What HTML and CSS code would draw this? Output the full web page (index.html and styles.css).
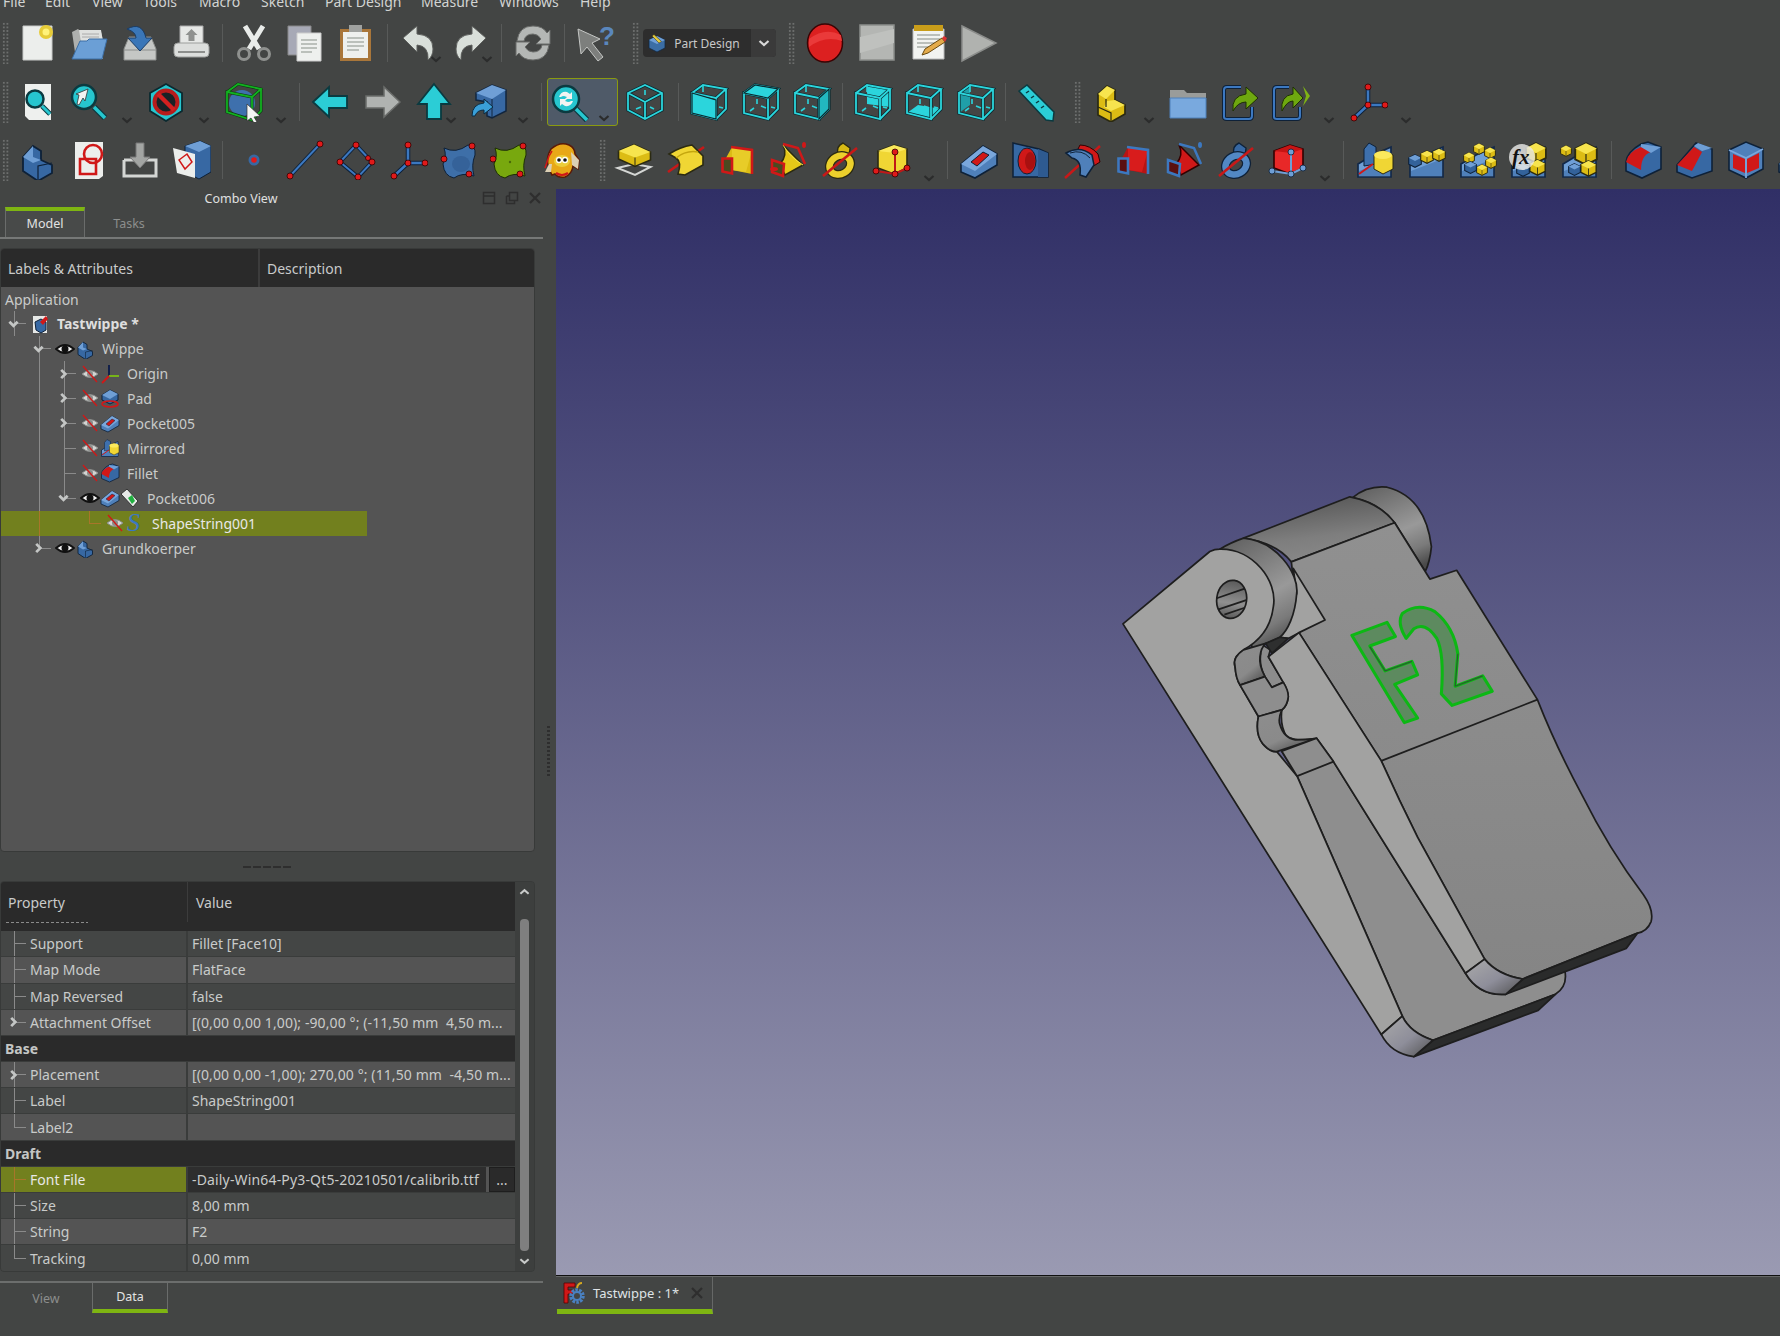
FILE: index.html
```html
<!DOCTYPE html>
<html lang="en">
<head>
<meta charset="utf-8">
<title>FreeCAD</title>
<link rel="stylesheet" href="styles.css">
</head>
<body>
<svg class="sprite" aria-hidden="true">
<defs>
<symbol id="ycube" viewBox="0 0 20 20"><path d="M10 1l9 4.500v9L10 19l-9-4.500v-9z" fill="#dcbc14" stroke="#2b2a12" stroke-width="1.600"/><path d="M1 5.500L10 10l9-4.500L10 1z" fill="#f7e44e"/><path d="M10 10v9" stroke="#2b2a12"/></symbol>
<symbol id="bcube" viewBox="0 0 20 20"><path d="M10 1l9 4.500v9L10 19l-9-4.500v-9z" fill="#33629a" stroke="#0e2138" stroke-width="1.600"/><path d="M1 5.500L10 10l9-4.500L10 1z" fill="#6f9fd6"/></symbol>
<symbol id="slab" viewBox="0 0 40 40"><path d="M3 37V24l15-9 18-8v30z" fill="#6f9fd6" stroke="#122848" stroke-width="1.700"/><path d="M4 31l31-12v17H4z" fill="#4f80ba"/></symbol>
<symbol id="chev" viewBox="0 0 12 7"><path d="M1.500 1l4.500 4 4.500-4" fill="none" stroke="currentColor" stroke-width="2.200"/></symbol>
<symbol id="chev2" viewBox="0 0 12 8"><path d="M1.500 1.500L6 6l4.500-4.500" fill="none" stroke="currentColor" stroke-width="3"/></symbol>
<symbol id="new" viewBox="0 0 40 40"><path d="M6 3h29v34H6z" fill="#eceeec" stroke="#c9cbc9"/><circle cx="29" cy="9" r="7" fill="#e6cb38"/><circle cx="29" cy="9" r="3.500" fill="#fff27a"/></symbol>
<symbol id="open" viewBox="0 0 40 40"><path d="M7 36L3 9l6-3 3 3h20l2 8v19z" fill="#aeb0ae"/><path d="M10 7h22l2 12H12z" fill="#dfe1df"/><path d="M13 11h17M13 14h17" stroke="#aaa"/><path d="M3 36l8-18 7 0 2-2h18l-5 20z" fill="#6b9fd6" stroke="#3c6ea5"/></symbol>
<symbol id="save" viewBox="0 0 40 40"><path d="M4 26l5-12h22l5 12v11H4z" fill="#c5c7c5" stroke="#8c8e8c"/><path d="M4 27h32" stroke="#8c8e8c"/><path d="M7 6q15-8 19 9h6L20 28 8 15h8q0-6-9-9z" fill="#3a76b8" stroke="#1b3d66"/></symbol>
<symbol id="print" viewBox="0 0 40 40"><path d="M9 3h23v20H9z" fill="#e6e8e6" stroke="#aaa"/><path d="M20.500 6l6 6h-3v6h-6v-6h-3z" fill="#8f918f"/><rect x="3" y="20" width="35" height="14" rx="4" fill="#dcdedc" stroke="#9c9e9c"/><path d="M7 29h27" stroke="#8c8e8c" stroke-width="2"/></symbol>
<symbol id="cut" viewBox="0 0 40 40"><path d="M11 3l14 23M29 3L15 26" stroke="#e9ecea" stroke-width="5" fill="none"/><circle cx="10" cy="31" r="5.500" fill="none" stroke="#8f918f" stroke-width="3"/><circle cx="30" cy="31" r="5.500" fill="none" stroke="#8f918f" stroke-width="3"/></symbol>
<symbol id="copy" viewBox="0 0 40 40"><path d="M3 3h23v29H3z" fill="#a7a9b6" stroke="#888"/><path d="M12 10h24v28H12z" fill="#eef0ee" stroke="#ccc"/><path d="M16 17h16M16 21h16M16 25h16M16 29h11" stroke="#aab0aa" stroke-width="1.500"/></symbol>
<symbol id="paste" viewBox="0 0 40 40"><path d="M4 6h31v32H4z" fill="#a9763a"/><path d="M7 9h25v26H7z" fill="#eef0ee"/><path d="M13 2h13v7H13z" fill="#9fa19f"/><path d="M11 15h17M11 19h17M11 23h17M11 27h12" stroke="#aab0aa" stroke-width="1.500"/></symbol>
<symbol id="undo" viewBox="0 0 40 40"><path d="M4 15L18 3v8q16 1 16 15 0 7-5 11 1-14-11-15v7z" fill="#d9dfda" stroke="#5d5f5d"/></symbol>
<symbol id="redo" viewBox="0 0 40 40"><path d="M36 15L22 3v8Q6 12 6 26q0 7 5 11-1-14 11-15v7z" fill="#d9dfda" stroke="#5d5f5d"/></symbol>
<symbol id="refresh" viewBox="0 0 40 40"><path d="M4 18Q6 3 20 3q10 0 14 7l3-3v14H23l5-5q-3-5-8-5-8 0-9 7z" fill="#b4b7b5" stroke="#6a6c6a"/><path d="M36 22q-2 15-16 15-10 0-14-7l-3 3V19h14l-5 5q3 5 8 5 8 0 9-7z" fill="#b4b7b5" stroke="#6a6c6a"/></symbol>
<symbol id="what" viewBox="0 0 40 40"><path d="M3 6l22 10-8 4 11 14-5 4-11-14-6 7z" fill="#7d7f7d" stroke="#c4c6c4"/><text x="24" y="22" font-family="Liberation Sans,sans-serif" font-weight="700" font-size="26" fill="#5a87bd">?</text></symbol>
<symbol id="pd" viewBox="0 0 40 40"><path d="M4 14l16-8 16 8v16l-16 8-16-8z" fill="#3b6ea5" stroke="#12263f" stroke-width="1.500"/><path d="M4 14l16 8 16-8-16-8z" fill="#6f9fd6"/><path d="M10 6l14 14 5-3L14 3z" fill="#e6cb38" stroke="#222"/></symbol>
<symbol id="rec" viewBox="0 0 40 40"><ellipse cx="20" cy="20" rx="17.500" ry="19" fill="#dc2020" stroke="#3a0404" stroke-width="1.500"/><path d="M4 16q16-12 32-4l1 6Q20 12 4 24z" fill="#ea3a3a"/></symbol>
<symbol id="stop" viewBox="0 0 40 40"><path d="M3 2h34v35H3z" fill="#b4b6b3" stroke="#8c8e8c" stroke-width="1.500"/><path d="M3 14L37 6v14L3 30z" fill="#bfc1be"/></symbol>
<symbol id="macro" viewBox="0 0 40 40"><path d="M5 6h31v30H5z" fill="#f2f3f1" stroke="#bbb"/><path d="M6 2h29v6H6z" fill="#c99d1a"/><path d="M9 12h23M9 16h23M9 20h23M9 24h12" stroke="#a9afa9" stroke-width="1.500"/><path d="M14 32l3-6 17-11 3 4-17 11z" fill="#e4ab4b" stroke="#6a4a10"/><path d="M34 15l3 4 2-4-3-2z" fill="#d33"/></symbol>
<symbol id="play" viewBox="0 0 40 40"><path d="M3 3l34 17L3 38z" fill="#b0b2af" stroke="#8a8c8a" stroke-width="1.500"/></symbol>
<symbol id="fitall" viewBox="0 0 40 40"><path d="M8 2h26v36H12l-4-4z" fill="#eef0ee"/><circle cx="18" cy="17" r="8.500" fill="#26c6cf" stroke="#0b3a40" stroke-width="2.500"/><path d="M25 24l8 8" stroke="#0b3a40" stroke-width="5"/><path d="M25 24l8 8" stroke="#26c6cf" stroke-width="3"/></symbol>
<symbol id="fitsel" viewBox="0 0 40 40"><circle cx="15" cy="15" r="12" fill="#26c6cf" stroke="#0b3a40" stroke-width="2.500"/><path d="M25 25l11 11" stroke="#0b3a40" stroke-width="6"/><path d="M25 25l11 11" stroke="#26c6cf" stroke-width="3.500"/><path d="M8 22l2-9-3-1 12-5-3 12-2-3-4 7z" fill="#f2f4f2" stroke="#333" stroke-width=".8"/></symbol>
<symbol id="nodraw" viewBox="0 0 40 40"><path d="M20 2l16 9v18l-16 10-16-10V11z" fill="#26c6cf" stroke="#0b2a30" stroke-width="1.800"/><circle cx="20" cy="20" r="11.500" fill="#1a2226" stroke="#b71c1c" stroke-width="4"/><path d="M12 12l16 16" stroke="#d42020" stroke-width="4.500"/></symbol>
<symbol id="view3d" viewBox="0 0 40 40"><circle cx="19" cy="21" r="13" fill="#3e70ad"/><path d="M4 10l25 5v23L4 30zM4 10l11-8 23 5-9 8M38 7v22l-9 9" fill="none" stroke="#0c3a10" stroke-width="3"/><path d="M4 10l25 5v23L4 30zM4 10l11-8 23 5-9 8M38 7v22l-9 9" fill="none" stroke="#12b020" stroke-width="1.800"/><path d="M24 22l13 12-6 1 3 5-3 1-3-5-4 3z" fill="#f4f6f4" stroke="#333" stroke-width=".7"/></symbol>
<symbol id="back" viewBox="0 0 40 40"><path d="M2 20l16-15v9h18v12H18v9z" fill="#2bcdd6" stroke="#0b3a40" stroke-width="1.800"/></symbol>
<symbol id="fwd" viewBox="0 0 40 40"><path d="M38 20L22 5v9H4v12h18v9z" fill="#b0b3b1" stroke="#6a6c6a" stroke-width="1.500"/></symbol>
<symbol id="up" viewBox="0 0 40 40"><path d="M20 2l16 20h-9v15H13V22H4z" fill="#2bcdd6" stroke="#0b3a40" stroke-width="1.800"/></symbol>
<symbol id="sync" viewBox="0 0 40 40"><path d="M7 11l16-8 14 5v21l-14 7-5-2V20L7 18z" fill="#3768a3" stroke="#12263f" stroke-width="1.500"/><path d="M7 11l16 6 14-9-14-5z" fill="#6f9fd6"/><path d="M23 17v19" stroke="#12263f"/><path d="M3 34q0-12 12-13v-4l9 8-9 7v-4q-7 0-9 6z" fill="#3a9fd8" stroke="#0b2a40"/></symbol>
<symbol id="magr" viewBox="0 0 40 40"><circle cx="16" cy="17" r="13" fill="#26c6cf" stroke="#0b3a40" stroke-width="2.500"/><path d="M26 27l11 11" stroke="#0b3a40" stroke-width="6"/><path d="M26 27l11 11" stroke="#26c6cf" stroke-width="3.500"/><path d="M9 15q2-6 8-5l3 2 2-2v7h-7l2-2-3-1q-2 0-3 1zM23 19q-2 6-8 5l-3-2-2 2v-7h7l-2 2 3 1q2 0 3-1z" fill="#f2f4f2"/></symbol>
<g id="wire"><path d="M3 11l24 5v21L3 31zM3 11l11-8 23 4-10 9M37 7v20l-10 10" fill="none" stroke="#0b2a30" stroke-width="3.200"/><path d="M3 11l24 5v21L3 31zM3 11l11-8 23 4-10 9M37 7v20l-10 10" fill="none" stroke="#2bd5dc" stroke-width="1.800"/><path d="M16 17v5M9 29l4-3M20 24l5 2M30 25l4 1M14 4v6" stroke="#2bd5dc" stroke-width="1.600"/></g>
<symbol id="iso" viewBox="0 0 40 40"><path d="M20 3l17 8v17l-17 9-17-9V11zM3 11l17 9 17-9M20 20v17" fill="none" stroke="#0b2a30" stroke-width="3.200"/><path d="M20 3l17 8v17l-17 9-17-9V11zM3 11l17 9 17-9M20 20v17" fill="none" stroke="#2bd5dc" stroke-width="1.800"/><path d="M20 8v5M11 27l5-2M25 25l4 2" stroke="#2bd5dc" stroke-width="1.600"/></symbol>
<symbol id="vfront" viewBox="0 0 40 40"><use href="#wire"/><path d="M3 11l24 7v19L3 31z" fill="#2bd5dc" stroke="#0b2a30" stroke-width="1.200"/></symbol>
<symbol id="vtop" viewBox="0 0 40 40"><use href="#wire"/><path d="M3 11l11-8 23 4-10 9z" fill="#2bd5dc" stroke="#0b2a30" stroke-width="1.200"/></symbol>
<symbol id="vright" viewBox="0 0 40 40"><use href="#wire"/><path d="M27 16l10-9v20l-10 10z" fill="#22b8c0" stroke="#0b2a30" stroke-width="1.200"/></symbol>
<symbol id="vrear" viewBox="0 0 40 40"><path d="M14 3l23 4v18l-23-3z" fill="#2bd5dc"/><use href="#wire"/></symbol>
<symbol id="vbot" viewBox="0 0 40 40"><path d="M3 31l11-8 23 4-10 10z" fill="#2bd5dc"/><use href="#wire"/></symbol>
<symbol id="vleft" viewBox="0 0 40 40"><path d="M3 11l11-8v20L3 31z" fill="#1f9fa8"/><use href="#wire"/></symbol>
<symbol id="meas" viewBox="0 0 40 40"><path d="M3 9l8-6 27 27-1 9-7-1z" fill="#2bcdd6" stroke="#0b3a40" stroke-width="1.500"/><path d="M10 11l3-2M15 16l3-2M20 21l3-2M25 26l3-2" stroke="#0b3a40" stroke-width="1.500"/></symbol>
<symbol id="part" viewBox="0 0 40 40"><path d="M7 12l9-8 8 4v10l10 5v9l-14 8-13-7z" fill="#dcbc14" stroke="#2b2a12" stroke-width="1.700"/><path d="M7 12l8 5 9-9-8-4zM16 19l8-1 10 5-14 6-7-4z" fill="#f7e44e"/><path d="M7 25l13 6v9M15 17v8" fill="none" stroke="#2b2a12" stroke-width="1.200"/></symbol>
<symbol id="folder" viewBox="0 0 40 40"><path d="M2 8h14l3 3h19v25H2z" fill="#9a9c9a"/><path d="M2 16h36v20H2z" fill="#79a9de" stroke="#4f80ba"/></symbol>
<symbol id="link" viewBox="0 0 40 40"><path d="M22 5H8q-3 0-3 3v27q0 2 3 2h22q3 0 3-3v-9" fill="none" stroke="#0e2138" stroke-width="4"/><path d="M22 5H8q-3 0-3 3v27q0 2 3 2h22q3 0 3-3v-9" fill="none" stroke="#3c78c0" stroke-width="2"/><path d="M14 29q-2-15 13-17V5l12 11-12 11v-7q-8 0-13 9z" fill="#6ea80f" stroke="#1e3004"/></symbol>
<symbol id="linki" viewBox="0 0 40 40"><path d="M18 5H6q-3 0-3 3v27q0 2 3 2h20q3 0 3-3v-9" fill="none" stroke="#0e2138" stroke-width="4"/><path d="M18 5H6q-3 0-3 3v27q0 2 3 2h20q3 0 3-3v-9" fill="none" stroke="#3c78c0" stroke-width="2"/><path d="M11 29q-2-15 11-17V5l10 11-10 10v-7q-6 0-11 10z" fill="#6ea80f" stroke="#1e3004"/><path d="M32 4l7 10-7 10 3-10z" fill="#7fb315"/></symbol>
<symbol id="axes" viewBox="0 0 40 40"><path d="M20 5v18M20 23h17M20 23L6 36" stroke="#0e2138" stroke-width="4.500" fill="none"/><path d="M20 5v18M20 23h17M20 23L6 36" stroke="#3c78c0" stroke-width="2.500" fill="none"/><g fill="#e01a1a" stroke="#300" stroke-width=".8"><circle cx="20" cy="5" r="3"/><circle cx="20" cy="23" r="3"/><circle cx="37" cy="23" r="3"/><circle cx="6" cy="36" r="3"/></g></symbol>
<symbol id="body" viewBox="0 0 40 40"><path d="M6 17L16 6l8 5v9l11 5v8l-14 8-15-10z" fill="#3768a3" stroke="#0e2138" stroke-width="1.800"/><path d="M6 17l10 6 8-3-8-3 0-11-10 11z" fill="#6f9fd6"/><path d="M21 41V26l14-3" stroke="#0e2138" stroke-width="1.200" fill="none"/></symbol>
<symbol id="sketch" viewBox="0 0 40 40"><path d="M6 2h28v34l-4 3H6z" fill="#eceeec"/><path d="M11 19h16v15H11z" fill="none" stroke="#d01818" stroke-width="2.600"/><circle cx="24" cy="14" r="9" fill="none" stroke="#d01818" stroke-width="2.600"/></symbol>
<symbol id="import" viewBox="0 0 40 40"><path d="M4 20v16h32V20H26M14 20H4" fill="none" stroke="#d4d6d4" stroke-width="3"/><path d="M16 3h8v14h6L20 28 10 17h6z" fill="#a3a5a3" stroke="#777"/></symbol>
<symbol id="shape" viewBox="0 0 40 40"><path d="M14 6l15-5 11 5v26l-12 7-14-7z" fill="#3768a3" stroke="#0e2138"/><path d="M14 6l14 6 12-6-11-5z" fill="#6f9fd6"/><path d="M2 8l22 6v24L6 33z" fill="#eceeec"/><path d="M8 20l8-6 5 8-7 7z" fill="none" stroke="#d01818" stroke-width="1.500"/></symbol>
<symbol id="point" viewBox="0 0 40 40"><circle cx="20" cy="20" r="5.500" fill="#3768a3"/><circle cx="20" cy="20" r="2.800" fill="#e01a1a"/></symbol>
<symbol id="line" viewBox="0 0 40 40"><path d="M5 36L35 4" stroke="#0e2138" stroke-width="4"/><path d="M5 36L35 4" stroke="#3c78c0" stroke-width="2"/><g fill="#e01a1a" stroke="#300" stroke-width=".8"><circle cx="5" cy="36" r="3"/><circle cx="35" cy="4" r="3"/></g></symbol>
<symbol id="plane" viewBox="0 0 40 40"><path d="M20 5l16 17-14 15L4 22z" fill="none" stroke="#0e2138" stroke-width="4"/><path d="M20 5l16 17-14 15L4 22z" fill="none" stroke="#3c78c0" stroke-width="2"/><g fill="#e01a1a" stroke="#300" stroke-width=".8"><circle cx="20" cy="5" r="3"/><circle cx="36" cy="22" r="3"/><circle cx="22" cy="37" r="3"/><circle cx="4" cy="22" r="3"/><circle cx="32" cy="18" r="2.500"/></g></symbol>
<symbol id="binder" viewBox="0 0 40 40"><path d="M5 8q12 6 24-3 8 0 7 10-4 10-1 21-12-4-20 2-10-2-11-14 4-8 1-16z" fill="#3e6fa8" stroke="#0e2138"/><ellipse cx="22" cy="24" rx="9" ry="8" fill="#356299"/><g fill="#e01a1a" stroke="#300" stroke-width=".8"><circle cx="33" cy="6" r="3"/><circle cx="5" cy="19" r="3"/><circle cx="30" cy="34" r="3"/></g></symbol>
<symbol id="gbinder" viewBox="0 0 40 40"><path d="M5 8q12 6 24-3 8 0 7 10-4 10-1 21-12-4-20 2-10-2-11-14 4-8 1-16z" fill="#78a80e" stroke="#1e3004"/><circle cx="20" cy="22" r="1.200" fill="#4a6a08"/><g fill="#e01a1a" stroke="#300" stroke-width=".8"><circle cx="33" cy="6" r="3"/><circle cx="3" cy="19" r="3"/><circle cx="30" cy="34" r="3"/></g></symbol>
<symbol id="clone" viewBox="0 0 40 40"><path d="M7 28Q3 18 9 9q9-8 18-4 6 3 6 9l4 6-1 9-5-3q-1 8-8 11-7 1-10-3l-3 1-2-4-2-1z" fill="#e8a818" stroke="#5a1a08" stroke-width="1.500"/><path d="M7 24L3 32l6 0 1-8zM29 12l8 8-1 9-6-4z" fill="#dccfb4"/><path d="M3 28l4-12 3-5" fill="none" stroke="#d01818" stroke-width="1.500"/><ellipse cx="20" cy="21" rx="8" ry="6" fill="#eccd3a"/><ellipse cx="17" cy="20" rx="3" ry="3.200" fill="#fff"/><ellipse cx="23" cy="20" rx="3" ry="3.200" fill="#fff"/><circle cx="17" cy="20" r="1.800" fill="#111"/><circle cx="23" cy="20" r="1.800" fill="#111"/><path d="M14 33q6 4 12 0" fill="none" stroke="#d01818" stroke-width="2.200"/></symbol>
<symbol id="pad" viewBox="0 0 40 40"><path d="M3.500 28l16.500-4 16.500 3-15.500 8z" fill="none" stroke="#d4d6d4" stroke-width="2"/><path d="M4.500 11L20 4.500 36.500 12v8L21 26.500 4.500 19z" fill="#dcbc14" stroke="#2b2a12" stroke-width="1.600"/><path d="M4.500 11L21 17.500 36.500 12 20 4.500z" fill="#f7e44e"/><path d="M21 17.500v9" stroke="#2b2a12"/></symbol>
<symbol id="rev" viewBox="0 0 40 40"><path d="M2 32L38 7" stroke="#c81818" stroke-width="2.600"/><path d="M3 14Q14 7 26 5l11 11v9L19 35l-7-1q4-12-2-16z" fill="#f0d634" stroke="#2b2a12" stroke-width="1.600"/><path d="M10 18q10-8 22-6" fill="none" stroke="#c4a60e" stroke-width="1.500"/></symbol>
<symbol id="loft" viewBox="0 0 40 40"><path d="M15 7l20 3v24l-20-4V18H9z" fill="#dcbc14"/><path d="M15 7l20 3-6 22-14-2z" fill="#e8cc28"/><path d="M14 7l21 3v24" fill="none" stroke="#d01818" stroke-width="2.600"/><path d="M5.500 18.500h9.500v15l-9.500-2z" fill="#4a4a20" stroke="#d01818" stroke-width="2.600"/></symbol>
<symbol id="pipe" viewBox="0 0 40 40"><path d="M15 5Q20 15 12 24l5 11 18-10z" fill="#e6c818" stroke="#2b2a12" stroke-width="1.500"/><path d="M15 5q7 12 20 20" fill="none" stroke="#f7e44e" stroke-width="1"/><path d="M15 4l15 4 7 16" fill="none" stroke="#d01818" stroke-width="2.500"/><path d="M4 20l12 4-1 12-11-4z" fill="#4a4a20" stroke="#d01818" stroke-width="2.500"/><ellipse cx="36" cy="5" rx="2" ry="3" fill="#d01818"/><ellipse cx="6" cy="29" rx="4" ry="2" fill="#d01818"/></symbol>
<symbol id="helix" viewBox="0 0 40 40"><path d="M18 14q-2-8 5-11l7 5q0 6-4 8z" fill="#d8ba14" stroke="#2b2a12" stroke-width="1.400"/><ellipse cx="20" cy="25" rx="11" ry="9" fill="none" stroke="#2b2a12" stroke-width="9" transform="rotate(-30 20 25)"/><ellipse cx="20" cy="25" rx="11" ry="9" fill="none" stroke="#ecd02c" stroke-width="6.500" transform="rotate(-30 20 25)"/><path d="M3 36L37 8" stroke="#c81818" stroke-width="2.600"/></symbol>
<symbol id="addbox" viewBox="0 0 40 40"><path d="M7 11L23 5l13 4v19l-13 6-16-6z" fill="#f0d634" stroke="#2b2a12" stroke-width="1.600"/><path d="M7 11l17 2 12-4-13-4z" fill="#fbe95c"/><path d="M24 12v22M5 31l19 3 12-6" fill="none" stroke="#c01818" stroke-width="2"/><g fill="#e01a1a" stroke="#300" stroke-width=".8"><circle cx="24" cy="12" r="3"/><circle cx="24" cy="34" r="3"/><circle cx="5" cy="31" r="3"/><circle cx="36" cy="28" r="3"/></g></symbol>
<symbol id="pocket" viewBox="0 0 40 40"><path d="M2 24L24 6l14 8v11L16 38 2 32z" fill="#4f80ba" stroke="#0e2138" stroke-width="1.600"/><path d="M2 24l14 7 22-17L24 6z" fill="#7aa7dc"/><path d="M12 22l12-10 6 3-12 11z" fill="#d01818" stroke="#0e2138"/></symbol>
<symbol id="hole" viewBox="0 0 40 40"><path d="M3 3l26 6 9 4v24H3z" fill="#3768a3" stroke="#0e2138" stroke-width="1.500"/><path d="M28 9l10 4v24H28z" fill="#2e5a90"/><ellipse cx="17" cy="21" rx="9" ry="13" fill="#d01818" stroke="#0e2138"/><ellipse cx="20" cy="21" rx="5" ry="9" fill="#a81010"/></symbol>
<symbol id="groove" viewBox="0 0 40 40"><path d="M3 38L38 6" stroke="#c81818" stroke-width="2.500"/><path d="M18 5q10 0 18 9l2 8-8 5Q26 14 16 9z" fill="#d01818" stroke="#300"/><path d="M4 13q14-8 26 2l2 10-8 12-6-2Q20 20 10 18z" fill="#4f80ba" stroke="#0e2138" stroke-width="1.500"/><path d="M8 13q12-4 20 5" fill="none" stroke="#0e2138"/></symbol>
<symbol id="subloft" viewBox="0 0 40 40"><path d="M15 7l20 3v24l-20-4V18H9z" fill="#b81414"/><path d="M15 7l20 3-6 22-14-2z" fill="#d81c1c"/><path d="M14 7l21 3v24" fill="none" stroke="#3c78c0" stroke-width="2.600"/><path d="M5.500 18.500h9.500v15l-9.500-2z" fill="#5a1010" stroke="#3c78c0" stroke-width="2.600"/></symbol>
<symbol id="subpipe" viewBox="0 0 40 40"><path d="M15 5Q20 15 12 24l5 11 18-10z" fill="#d01818" stroke="#300" stroke-width="1.500"/><path d="M15 4l15 4 7 16" fill="none" stroke="#3c78c0" stroke-width="2.500"/><path d="M4 20l12 4-1 12-11-4z" fill="#5a1010" stroke="#3c78c0" stroke-width="2.500"/><ellipse cx="36" cy="5" rx="2" ry="3" fill="#3c78c0"/></symbol>
<symbol id="subhelix" viewBox="0 0 40 40"><path d="M18 14q-2-8 5-11l7 5q0 6-4 8z" fill="#3768a3" stroke="#0e2138" stroke-width="1.400"/><ellipse cx="20" cy="25" rx="11" ry="9" fill="none" stroke="#0e2138" stroke-width="9" transform="rotate(-30 20 25)"/><ellipse cx="20" cy="25" rx="11" ry="9" fill="none" stroke="#5288c4" stroke-width="6.500" transform="rotate(-30 20 25)"/><path d="M3 36L37 8" stroke="#c81818" stroke-width="2.600"/></symbol>
<symbol id="subbox" viewBox="0 0 40 40"><path d="M7 11L23 5l13 4v19l-13 6-16-6z" fill="#e82828" stroke="#300" stroke-width="1.600"/><path d="M7 11l17 2 12-4-13-4z" fill="#c81414"/><path d="M24 12v22M5 31l19 3 12-6" fill="none" stroke="#6f9fd6" stroke-width="2"/><g fill="#6f9fd6" stroke="#0e2138" stroke-width=".8"><circle cx="24" cy="12" r="3"/><circle cx="24" cy="34" r="3"/><circle cx="5" cy="31" r="3"/><circle cx="36" cy="28" r="3"/></g></symbol>
<symbol id="mirror" viewBox="0 0 40 40"><use href="#slab"/><path d="M9 26V9l5-6 7 4 0 17z" fill="#3e70ad" stroke="#0e2138"/><path d="M4 34l14-10" stroke="#d01818" stroke-width="2"/><path d="M19 15l9-5 10 5v14l-10 5-9-5z" fill="#f0d634" stroke="#2b2a12"/><ellipse cx="28" cy="15" rx="9" ry="4" fill="#fbe95c"/></symbol>
<symbol id="linear" viewBox="0 0 40 40"><use href="#slab"/><use href="#bcube" x="1" y="14" width="14" height="14"/><use href="#ycube" x="13" y="10" width="14" height="14"/><use href="#ycube" x="25" y="8" width="14" height="14"/></symbol>
<symbol id="polar" viewBox="0 0 40 40"><use href="#slab"/><use href="#ycube" x="15" y="3" width="12" height="12"/><use href="#ycube" x="26" y="7" width="12" height="12"/><use href="#ycube" x="27" y="17" width="12" height="12"/><use href="#ycube" x="18" y="24" width="12" height="12"/><use href="#ycube" x="5" y="12" width="12" height="12"/><use href="#bcube" x="6" y="21" width="13" height="13"/></symbol>
<symbol id="multifx" viewBox="0 0 40 40"><use href="#slab"/><use href="#ycube" x="16" y="2" width="22" height="22"/><use href="#ycube" x="20" y="19" width="17" height="17"/><use href="#bcube" x="7" y="23" width="14" height="14"/><circle cx="13" cy="17" r="13" fill="#e6e8e6" opacity=".82"/><text x="3" y="24" font-family="Liberation Serif,serif" font-style="italic" font-weight="700" font-size="21" fill="#111">fx</text></symbol>
<symbol id="multi" viewBox="0 0 40 40"><use href="#slab"/><use href="#ycube" x="14" y="2" width="24" height="24"/><use href="#ycube" x="0" y="5" width="12" height="12"/><use href="#ycube" x="20" y="20" width="17" height="17"/><use href="#bcube" x="8" y="23" width="13" height="13"/></symbol>
<symbol id="fillet" viewBox="0 0 40 40"><path d="M3 22Q4 12 18 4l7-2 13 5v22L19 38 3 31z" fill="#3768a3" stroke="#0e2138" stroke-width="1.600"/><path d="M3 22q2-10 15-15l10 5q-10 3-10 18z" fill="#d01818"/><path d="M18 4l20 3-10 6-10-6z" fill="#6f9fd6"/></symbol>
<symbol id="chamfer" viewBox="0 0 40 40"><path d="M3 25L22 3l16 6v22L18 38 3 32z" fill="#3768a3" stroke="#0e2138" stroke-width="1.600"/><path d="M3 25l15 6 10-19-8-5z" fill="#d01818"/><path d="M20 6l8 5 10-3-14-5z" fill="#6f9fd6"/></symbol>
<symbol id="draft" viewBox="0 0 40 40"><path d="M3 10L20 2l17 7v20l-17 9-17-8z" fill="#4f80ba" stroke="#0e2138" stroke-width="1.600"/><path d="M7 14l12 5v14L7 28zM21 19l12-6v15l-12 5z" fill="#d01818"/><path d="M3 10l17 8 17-9M20 18v20" fill="none" stroke="#7aa7dc" stroke-width="1.800"/></symbol>
<symbol id="eye" viewBox="0 0 20 20"><path d="M1 10q9-8 18 0-9 8-18 0z" fill="#f2f2f2" stroke="#111" stroke-width="1.800"/><circle cx="10" cy="10" r="3.500" fill="#111"/></symbol>
<symbol id="eyeoff" viewBox="0 0 20 20"><path d="M2 10q8-7 16 0-8 7-16 0z" fill="#d2d4d2" stroke="#8a8c8a"/><circle cx="10" cy="10" r="3" fill="#8a8c8a"/><path d="M3 2l14 16" stroke="#d01818" stroke-width="1.300"/></symbol>
<symbol id="doc" viewBox="0 0 20 20"><path d="M3 2h14v17H3z" fill="#e6e8e6"/><path d="M5 8l6-3 5 3v8l-5 3-5-3z" fill="#3768a3" stroke="#0e2138"/><path d="M10 8l6-6 2 3-5 6z" fill="#d01818"/></symbol>
<symbol id="orig" viewBox="0 0 20 20"><path d="M9 1v11" stroke="#12204a" stroke-width="2"/><path d="M9 12h10" stroke="#7cc014" stroke-width="1.800"/><path d="M9 12l-7 7" stroke="#d01818" stroke-width="2"/></symbol>
<symbol id="padt" viewBox="0 0 20 20"><path d="M2 7l8-5 8 4v6l-8 4-8-4z" fill="#3768a3" stroke="#0e2138"/><path d="M2 7l8 4 8-5-8-4z" fill="#6f9fd6"/><ellipse cx="10" cy="16" rx="8" ry="3" fill="none" stroke="#d01818" stroke-width="1.600"/></symbol>
<symbol id="tag" viewBox="0 0 20 20"><path d="M1 6l6-5 11 12-5 6z" fill="#e6e8e6" stroke="#333"/><path d="M8 10l4-3 3 6-3 3z" fill="#20b040"/></symbol>
<symbol id="stxt" viewBox="0 0 20 20"><text x="2" y="18" font-family="Liberation Serif,serif" font-style="italic" font-size="26" fill="#3c78c0">S</text></symbol>
<symbol id="x" viewBox="0 0 14 14"><path d="M2 2l10 10M12 2L2 12" stroke="currentColor" stroke-width="2.200"/></symbol>
<symbol id="fc" viewBox="0 0 22 22"><path d="M1 1h11v4H5v3h5v4H5v9H1z" fill="#d01818" stroke="#500" stroke-width=".8"/><circle cx="14" cy="14" r="6" fill="none" stroke="#4a80c0" stroke-width="3.500" stroke-dasharray="2.500 1.200"/><circle cx="14" cy="14" r="4" fill="none" stroke="#4a80c0" stroke-width="2"/><path d="M14 6q1-5 5-5" fill="none" stroke="#d4a820" stroke-width="2"/></symbol>
</defs>
</svg>

<nav class="menubar"><span>File</span><span>Edit</span><span>View</span><span>Tools</span><span>Macro</span><span>Sketch</span><span>Part Design</span><span>Measure</span><span>Windows</span><span>Help</span></nav>

<div class="tb">
<i class="grip"></i>
<b class="t"><svg><use href="#new"/></svg></b><b class="t"><svg><use href="#open"/></svg></b><b class="t"><svg><use href="#save"/></svg></b><b class="t"><svg><use href="#print"/></svg></b><i class="sep"></i>
<b class="t"><svg><use href="#cut"/></svg></b><b class="t"><svg><use href="#copy"/></svg></b><b class="t"><svg><use href="#paste"/></svg></b><i class="sep"></i>
<b class="t menu"><svg><use href="#undo"/></svg><svg class="dd"><use href="#chev"/></svg></b><b class="t menu"><svg><use href="#redo"/></svg><svg class="dd"><use href="#chev"/></svg></b><i class="sep"></i>
<b class="t"><svg><use href="#refresh"/></svg></b><i class="sep"></i>
<b class="t"><svg><use href="#what"/></svg></b>
<i class="grip g-tight"></i>
<div class="combo"><svg class="combo-ic"><use href="#pd"/></svg><span class="combo-tx">Part Design</span><span class="combo-btn"><svg><use href="#chev"/></svg></span></div>
<i class="grip g-tight2"></i>
<b class="t"><svg><use href="#rec"/></svg></b><b class="t"><svg><use href="#stop"/></svg></b><b class="t"><svg><use href="#macro"/></svg></b><b class="t"><svg><use href="#play"/></svg></b>
</div>

<div class="tb">
<i class="grip"></i>
<b class="t"><svg><use href="#fitall"/></svg></b><b class="t wide"><svg><use href="#fitsel"/></svg><svg class="dd"><use href="#chev"/></svg></b><b class="t wide"><svg><use href="#nodraw"/></svg><svg class="dd"><use href="#chev"/></svg></b><b class="t wide"><svg><use href="#view3d"/></svg><svg class="dd"><use href="#chev"/></svg></b><i class="sep"></i>
<b class="t"><svg><use href="#back"/></svg></b><b class="t"><svg><use href="#fwd"/></svg></b><b class="t up"><svg><use href="#up"/></svg><svg class="dd"><use href="#chev"/></svg></b><b class="t wide sy"><svg><use href="#sync"/></svg><svg class="dd"><use href="#chev"/></svg></b><i class="sep"></i>
<b class="t active"><svg><use href="#magr"/></svg><svg class="dd"><use href="#chev"/></svg></b><b class="t iso-b"><svg><use href="#iso"/></svg></b><i class="sep"></i>
<b class="t"><svg><use href="#vfront"/></svg></b><b class="t"><svg><use href="#vtop"/></svg></b><b class="t"><svg><use href="#vright"/></svg></b><i class="sep n1"></i>
<b class="t"><svg><use href="#vrear"/></svg></b><b class="t"><svg><use href="#vbot"/></svg></b><b class="t"><svg><use href="#vleft"/></svg></b><i class="sep n2"></i>
<b class="t"><svg><use href="#meas"/></svg></b>
<i class="grip g-mid"></i>
<b class="t wide"><svg><use href="#part"/></svg><svg class="dd"><use href="#chev"/></svg></b><b class="t"><svg><use href="#folder"/></svg></b><b class="t"><svg><use href="#link"/></svg></b><b class="t wide"><svg><use href="#linki"/></svg><svg class="dd"><use href="#chev"/></svg></b><b class="t wide"><svg><use href="#axes"/></svg><svg class="dd"><use href="#chev"/></svg></b>
</div>

<div class="tb">
<i class="grip"></i>
<b class="t"><svg><use href="#body"/></svg></b><b class="t"><svg><use href="#sketch"/></svg></b><b class="t"><svg><use href="#import"/></svg></b><b class="t"><svg><use href="#shape"/></svg></b><i class="sep"></i>
<b class="t"><svg><use href="#point"/></svg></b><b class="t"><svg><use href="#line"/></svg></b><b class="t"><svg><use href="#plane"/></svg></b><b class="t"><svg><use href="#axes"/></svg></b><b class="t"><svg><use href="#binder"/></svg></b><b class="t"><svg><use href="#gbinder"/></svg></b><b class="t"><svg><use href="#clone"/></svg></b>
<i class="grip g-mid2"></i>
<b class="t"><svg><use href="#pad"/></svg></b><b class="t"><svg><use href="#rev"/></svg></b><b class="t"><svg><use href="#loft"/></svg></b><b class="t"><svg><use href="#pipe"/></svg></b><b class="t"><svg><use href="#helix"/></svg></b><b class="t wide"><svg><use href="#addbox"/></svg><svg class="dd"><use href="#chev"/></svg></b><i class="sep"></i>
<b class="t"><svg><use href="#pocket"/></svg></b><b class="t"><svg><use href="#hole"/></svg></b><b class="t"><svg><use href="#groove"/></svg></b><b class="t"><svg><use href="#subloft"/></svg></b><b class="t"><svg><use href="#subpipe"/></svg></b><b class="t"><svg><use href="#subhelix"/></svg></b><b class="t wide"><svg><use href="#subbox"/></svg><svg class="dd"><use href="#chev"/></svg></b><i class="sep"></i>
<b class="t"><svg><use href="#mirror"/></svg></b><b class="t"><svg><use href="#linear"/></svg></b><b class="t"><svg><use href="#polar"/></svg></b><b class="t"><svg><use href="#multifx"/></svg></b><b class="t"><svg><use href="#multi"/></svg></b><i class="sep"></i>
<b class="t"><svg><use href="#fillet"/></svg></b><b class="t"><svg><use href="#chamfer"/></svg></b><b class="t"><svg><use href="#draft"/></svg></b><b class="t"><svg><use href="#pocket"/></svg></b>
</div>

<main class="main">
<aside class="dock">
  <header class="dock-title"><span>Combo View</span><div class="dock-btns"><svg viewBox="0 0 14 14"><path d="M1.500 1.500h11v11h-11zM1.500 5h11" fill="none" stroke="#2e2e2e" stroke-width="1.500"/></svg><svg viewBox="0 0 14 14"><path d="M4.500 1.500h8v8h-8zM1.500 5h3M1.500 5v7.500h8v-3" fill="none" stroke="#2e2e2e" stroke-width="1.500"/></svg><svg class="dock-x"><use href="#x"/></svg></div></header>
  <div class="tabs-top"><span class="tab on">Model</span><span class="tab">Tasks</span></div>

  <section class="tree">
    <div class="thead"><span>Labels &amp; Attributes</span><span>Description</span></div>
    <div class="row app">Application</div>
    <div class="row doc-row"><i class="g o"><svg><use href="#chev2"/></svg></i><span class="nm"><svg class="ti"><use href="#doc"/></svg><em class="strong">Tastwippe *</em></span></div>
    <div class="row"><i class="g"></i><i class="g o"><svg><use href="#chev2"/></svg></i><span class="nm"><svg class="ti"><use href="#eye"/></svg><svg class="ti"><use href="#body"/></svg><em>Wippe</em></span></div>
    <div class="row"><i class="g"></i><i class="g v"></i><i class="g c"><svg><use href="#chev2"/></svg></i><span class="nm"><svg class="ti"><use href="#eyeoff"/></svg><svg class="ti"><use href="#orig"/></svg><em>Origin</em></span></div>
    <div class="row"><i class="g"></i><i class="g v"></i><i class="g c"><svg><use href="#chev2"/></svg></i><span class="nm"><svg class="ti"><use href="#eyeoff"/></svg><svg class="ti"><use href="#padt"/></svg><em>Pad</em></span></div>
    <div class="row"><i class="g"></i><i class="g v"></i><i class="g c"><svg><use href="#chev2"/></svg></i><span class="nm"><svg class="ti"><use href="#eyeoff"/></svg><svg class="ti"><use href="#pocket"/></svg><em>Pocket005</em></span></div>
    <div class="row"><i class="g"></i><i class="g v"></i><i class="g t"></i><span class="nm"><svg class="ti"><use href="#eyeoff"/></svg><svg class="ti"><use href="#mirror"/></svg><em>Mirrored</em></span></div>
    <div class="row"><i class="g"></i><i class="g v"></i><i class="g t"></i><span class="nm"><svg class="ti"><use href="#eyeoff"/></svg><svg class="ti"><use href="#fillet"/></svg><em>Fillet</em></span></div>
    <div class="row"><i class="g"></i><i class="g v"></i><i class="g oe"><svg><use href="#chev2"/></svg></i><span class="nm"><svg class="ti"><use href="#eye"/></svg><svg class="ti"><use href="#pocket"/></svg><svg class="ti"><use href="#tag"/></svg><em>Pocket006</em></span></div>
    <div class="row sel"><i class="g"></i><i class="g v"></i><i class="g"></i><i class="g l"></i><span class="nm"><svg class="ti"><use href="#eyeoff"/></svg><svg class="ti"><use href="#stxt"/></svg><em>ShapeString001</em></span></div>
    <div class="row"><i class="g"></i><i class="g ce"><svg><use href="#chev2"/></svg></i><span class="nm"><svg class="ti"><use href="#eye"/></svg><svg class="ti"><use href="#body"/></svg><em>Grundkoerper</em></span></div>
  </section>

  <div class="split"></div>

  <section class="props">
    <div class="pmain">
      <div class="phead"><span>Property</span><span>Value</span></div>
      <div class="pclip"></div>
      <div class="pr"><div class="pk"><i class="g t"></i>Support</div><div class="pv">Fillet [Face10]</div></div>
      <div class="pr alt"><div class="pk"><i class="g t"></i>Map Mode</div><div class="pv">FlatFace</div></div>
      <div class="pr"><div class="pk"><i class="g t"></i>Map Reversed</div><div class="pv">false</div></div>
      <div class="pr alt"><div class="pk"><i class="g ce"><svg><use href="#chev2"/></svg></i>Attachment Offset</div><div class="pv long">[(0,00 0,00 1,00); -90,00 °; (-11,50 mm&nbsp; 4,50 m...</div></div>
      <div class="pr grp">Base</div>
      <div class="pr alt"><div class="pk"><i class="g c"><svg><use href="#chev2"/></svg></i>Placement</div><div class="pv long">[(0,00 0,00 -1,00); 270,00 °; (11,50 mm&nbsp; -4,50 m...</div></div>
      <div class="pr"><div class="pk"><i class="g t"></i>Label</div><div class="pv">ShapeString001</div></div>
      <div class="pr alt"><div class="pk"><i class="g l"></i>Label2</div><div class="pv"></div></div>
      <div class="pr grp">Draft</div>
      <div class="pr edit"><div class="pk sel-k"><i class="g t"></i>Font File</div><div class="pedit"><span class="pfile">-Daily-Win64-Py3-Qt5-20210501/calibrib.ttf</span><span class="pdots">...</span></div></div>
      <div class="pr"><div class="pk"><i class="g t"></i>Size</div><div class="pv">8,00 mm</div></div>
      <div class="pr alt"><div class="pk"><i class="g t"></i>String</div><div class="pv">F2</div></div>
      <div class="pr"><div class="pk"><i class="g l"></i>Tracking</div><div class="pv">0,00 mm</div></div>
    </div>
    <div class="pscroll"><svg class="sc-up"><use href="#chev"/></svg><div class="thumb"></div><svg><use href="#chev"/></svg></div>
  </section>

  <div class="tabs-bot"><span class="tab2">View</span><span class="tab2 on">Data</span></div>
</aside>

<div class="work">
  <div class="view">
    <svg class="scene" viewBox="556 189 1224 1086" preserveAspectRatio="none">
      <defs>
        <linearGradient id="gc" x1=".35" y1="0" x2=".65" y2="1"><stop offset="0" stop-color="#555"/><stop offset=".6" stop-color="#7e7e7e"/><stop offset="1" stop-color="#8a8a8a"/></linearGradient>
        <linearGradient id="gh" x1=".3" y1="0" x2=".7" y2="1"><stop offset="0" stop-color="#666"/><stop offset=".55" stop-color="#999"/><stop offset=".8" stop-color="#7a7a7a"/><stop offset="1" stop-color="#4a4a4a"/></linearGradient>
        <linearGradient id="gn" x1=".2" y1="0" x2=".8" y2="1"><stop offset="0" stop-color="#8d8d8d"/><stop offset=".6" stop-color="#8a8a8a"/><stop offset="1" stop-color="#4f4f4f"/></linearGradient>
        <linearGradient id="gf" x1="0" y1="0" x2="1" y2="1"><stop offset="0" stop-color="#aaa"/><stop offset=".55" stop-color="#8e8e9a"/><stop offset="1" stop-color="#505050"/></linearGradient>
        <linearGradient id="gt" x1="0" y1="0" x2="0" y2="1"><stop offset="0" stop-color="#909090"/><stop offset="1" stop-color="#858585"/></linearGradient>
        <linearGradient id="gb" x1=".5" y1="0" x2=".5" y2="1"><stop offset="0" stop-color="#5a5a5a"/><stop offset=".6" stop-color="#8f8f8f"/><stop offset="1" stop-color="#5a5a5a"/></linearGradient>
      </defs>
      <g transform="translate(1100 470) scale(.3827)" stroke="#1e1e1e" stroke-width="4.500" stroke-linejoin="round">
        <path d="M660 72Q700 40 750 45Q850 70 866 200Q862 240 850 265L770 138Q730 85 660 72Z" fill="url(#gh)"/>
        <path d="M375 178L653 70Q730 85 770 138L500 240Q460 190 375 178Z" fill="url(#gc)"/>
        <path d="M475 735L570 700L610 762L955 1315Q990 1375 1060 1370L1100 1340L1215 1310Q1222 1350 1190 1370L870 1490Q810 1470 790 1427L515 800Z" fill="#8e8e8e"/>
        <path d="M870 1490L1190 1370L1145 1412L820 1533Z" fill="#2a2b2b"/>
        <path d="M500 240L770 138L862 285L932 262L1143 600Q1190 720 1260 850Q1330 990 1420 1110Q1448 1150 1440 1180Q1430 1205 1405 1210L1105 1330Q1040 1320 1005 1278L830 960Q780 860 735 760L520 425Z" fill="url(#gt)"/>
        <path d="M735 760L1143 600" fill="none"/>
        <path d="M1105 1330L1405 1210L1375 1250L1060 1370Z" fill="#2a2b2b"/>
        <path d="M418 453L445 470L440 488L479 555L449 568L431 540Q415 510 420 480Z" fill="#8c8c8c"/>
        <path d="M505 257L588 392L520 425L492 440L470 437Q505 360 514 322Z" fill="#a2a2a1"/>
        <path d="M440 488L520 425L735 760Q780 860 830 960L1005 1278L955 1315L610 762L566 701Q515 710 488 697Q470 670 475 627Q490 615 492 592Q490 575 479 555Z" fill="#a2a2a1"/>
        <path d="M955 1315L1005 1278Q1040 1320 1105 1330L1060 1370Q990 1375 955 1315Z" fill="url(#gf)"/>
        <path d="M313 207Q340 190 375 178C460 185 520 270 514 322C510 380 490 420 470 437L400 470L340 300Z" fill="url(#gh)"/>
        <path d="M60 402L287 213Q300 207 313 207C400 205 465 290 453 357C448 400 430 440 375 470Q345 490 353 514Q355 545 366 562L414 644Q405 690 425 715Q445 738 462 736L515 800L790 1427L735 1475Z" fill="#a2a2a1"/>
        <path d="M735 1475L790 1427Q810 1470 870 1490L820 1533Q760 1525 735 1475Z" fill="url(#gf)"/>
        <path d="M433 453L470 437L492 440L449 479Z" fill="#2e2f2f"/>
        <path d="M375 470Q345 490 353 514Q355 545 366 562L431 540Q415 510 418 488Q420 465 433 453Z" fill="url(#gn)"/>
        <path d="M366 562L431 540L449 568L479 555Q492 575 492 592Q490 615 475 627L414 644Z" fill="#8e8e8e"/>
        <path d="M414 644L475 627Q465 650 470 665Q480 700 510 705Q535 705 566 701L462 736Q445 738 425 715Q405 690 414 644Z" fill="url(#gn)"/>
        <path d="M475 735L566 701L610 762L515 800Z" fill="#8e8e8e"/>
        <ellipse cx="344" cy="338" rx="39" ry="50" fill="url(#gb)" transform="rotate(8 344 338)"/>
        <path d="M305 335L378 310M308 365L382 340M325 378L378 360" fill="none"/>
        <path d="M658 432L750 398L772 435L705 460L745 525L815 500L830 535L770 560L830 648L795 660Z" fill="#5d8a5f" stroke="#0cb814" stroke-width="8"/>
        <path d="M800 440Q775 400 790 375Q830 345 875 370Q925 410 935 480L928 565L1000 538L1025 578L920 615L892 585Q900 480 880 440Q850 395 820 415Z" fill="#5d8a5f" stroke="#0cb814" stroke-width="8"/>
        <path d="M705 462L745 525M745 525L815 500M928 565L1000 538M935 480L928 565" fill="none" stroke="#2a5a30" stroke-width="3"/>
      </g>
    </svg>
  </div>
  <div class="mdi"><div class="mdi-tab"><svg class="fc"><use href="#fc"/></svg><span>Tastwippe : 1*</span><svg class="mdi-x"><use href="#x"/></svg></div></div>
</div>
</main>
</body>
</html>
```
FILE: styles.css
```css
* { box-sizing: border-box; }
html, body { margin: 0; height: 100%; }
body {
  width: 1780px; height: 1336px; overflow: hidden;
  background: #434544; color: #c9cbca;
  font-family: "Noto Sans", "Open Sans", sans-serif; font-size: 14px;
}
.sprite { position: absolute; width: 0; height: 0; }

.menubar { height: 14px; overflow: hidden; display: flex; align-items: flex-end; padding: 0 0 5px 3px; font-size: 14px; line-height: 14px; color: #d2d4d3; }
.menubar span:nth-child(1) { width: 42px; }
.menubar span:nth-child(2) { width: 47px; }
.menubar span:nth-child(3) { width: 51px; }
.menubar span:nth-child(4) { width: 56px; }
.menubar span:nth-child(5) { width: 62px; }
.menubar span:nth-child(6) { width: 64px; }
.menubar span:nth-child(7) { width: 96px; }
.menubar span:nth-child(8) { width: 78px; }
.menubar span:nth-child(9) { width: 81px; }

.tb { height: 58.400px; display: flex; align-items: center; padding-left: 2px; overflow: hidden; white-space: nowrap; }
.tb > * { flex: none; font-style: normal; font-weight: 400; }
.grip { width: 8px; height: 42px; margin-right: 1.700px; background: radial-gradient(circle, #6d6f6e 1.100px, transparent 1.400px) 0 0 / 3.600px 3.600px; }
.g-tight { margin: 0 3px 0 11px; }
.g-tight2 { margin: 0 3.500px 0 12px; }
.g-mid { margin: 0 3px 0 13px; width: 8px; }
.g-mid2 { margin: 0 2px 0 11.500px; }
.sep { width: 11.300px; height: 38px; background: linear-gradient(#585a59, #585a59) center / 1px 100% no-repeat; }
.sep.n1 { width: 9.800px; }
.sep.n2 { width: 8.800px; }
.t { width: 51.300px; height: 44px; display: flex; align-items: center; padding-left: 5.650px; }
.t svg { width: 40px; height: 40px; flex: none; }
.t .dd { width: 12px; height: 7px; color: #2b2c2c; align-self: flex-end; margin: 0 0 0 -8px; }
.t.menu .dd { margin-bottom: 2px; margin-left: -9px; }
.t.wide { width: 77px; }
.t.wide .dd { margin-left: 12px; margin-bottom: 0; }
.t.up { width: 55px; }
.t.up .dd { margin-left: -9px; margin-bottom: 0; }
.t.sy { width: 73px; }
.t.sy .dd { margin-left: 8px; }
.t.active { width: 71px; height: 48px; margin: 0 2px 0 -.500px; padding-left: 2px; background: #4f5a68; border: 1.500px solid #8a9a10; border-radius: 3px; }
.t.active .dd { margin-left: 8px; margin-bottom: 3px; }
.t.iso-b { margin-right: 1.500px; }

.combo { width: 133px; height: 28px; display: flex; align-items: center; background: #2d2d2d; border-radius: 4px; font-size: 12px; color: #c8c8c8; }
.combo-ic { width: 20px; height: 20px; margin: 0 7px 0 4px; }
.combo-tx { flex: 1; }
.combo-btn { width: 25px; height: 100%; background: #3a3a3a; border-radius: 0 4px 4px 0; display: flex; align-items: center; justify-content: center; color: #d8d8d8; }
.combo-btn svg { width: 12px; height: 7px; }

.main { height: 1146.800px; display: flex; }
.dock { width: 556px; flex: none; display: flex; flex-direction: column; background: repeating-linear-gradient(#2e2e2e 0 2px, transparent 2px 4px) 547px 537px / 3px 50px no-repeat; }

.dock-title { height: 18px; display: flex; align-items: center; font-size: 12.500px; color: #e0e0e0; }
.dock-title > span { width: 482px; text-align: center; }
.dock-btns { display: flex; gap: 9px; }
.dock-btns svg { width: 14px; height: 14px; }
.dock-x { color: #2e2e2e; }

.tabs-top { width: 543px; height: 32px; display: flex; padding-left: 5px; border-bottom: 2px solid #767877; }
.tab { width: 80px; display: flex; align-items: center; justify-content: center; font-size: 12.500px; color: #8c8e8d; border-top: 4px solid transparent; padding-bottom: 2px; }
.tab.on { color: #e2e2e2; border-top-color: #7eb512; border-left: 1px solid #6a6c6b; border-right: 1px solid #6a6c6b; background: #484a49; }
.tabs-top .tab:not(.on) { width: 88px; }

.tree { width: 535px; height: 604px; margin-top: 9px; flex: none; background: #545454; border: 1px solid #383a39; border-radius: 4px; overflow: hidden; }
.thead { height: 38px; display: flex; align-items: center; background: #2a2a2a; }
.thead span:first-child { width: 259px; height: 100%; padding-left: 7px; display: flex; align-items: center; border-right: 2px solid #3c3c3c; }
.thead span:last-child { padding-left: 7px; }
.row { --ln: #8a8a8a; height: 24.950px; display: flex; align-items: center; white-space: nowrap; }
.row.app { height: 24px; padding-left: 4px; }
.row.sel { --ln: #a8752a; width: 366px; background: #72801e; color: #e8e8e8; }
.nm { display: flex; align-items: center; padding-left: 4px; }
.nm em { font-style: normal; margin-left: 7px; }
.nm .strong { font-weight: 700; color: #dedede; }
.ti { width: 20px; height: 20px; flex: none; }

.g { width: 25px; height: 100%; flex: none; display: flex; align-items: center; padding-left: 7px; }
.g svg { width: 11px; height: 8px; color: #c4c6c5; }
.g.c svg, .g.ce svg { transform: rotate(-90deg); }
.g.v { background: linear-gradient(var(--ln), var(--ln)) 12.500px 0 / 1px 100% no-repeat; }
.g.t, .g.c { background: linear-gradient(var(--ln), var(--ln)) 12.500px 0 / 1px 100% no-repeat, linear-gradient(var(--ln), var(--ln)) 13px 50% / 12px 1px no-repeat; }
.g.l, .g.ce, .g.oe { background: linear-gradient(var(--ln), var(--ln)) 12.500px 0 / 1px 50% no-repeat, linear-gradient(var(--ln), var(--ln)) 13px 50% / 12px 1px no-repeat; }
.g.o { background: linear-gradient(var(--ln), var(--ln)) 12.500px 0 / 1px 100% no-repeat, linear-gradient(var(--ln), var(--ln)) 13px 50% / 12px 1px no-repeat; }

.split { height: 29px; flex: none; background: repeating-linear-gradient(90deg, #2e2e2e 0 8px, transparent 8px 10px) 243px 14px / 48px 2px no-repeat; }

.props { --ln: #8a8a8a; width: 535px; height: 391px; flex: none; display: flex; background: #3f4140; border: 1px solid #383a39; border-radius: 4px; overflow: hidden; }
.pmain { flex: 1; min-width: 0; }
.phead { height: 40px; display: flex; align-items: center; background: #2a2a2a; }
.phead span:first-child { width: 187px; height: 100%; padding-left: 7px; display: flex; align-items: center; border-right: 1px solid #3c3c3c; }
.phead span:last-child { padding-left: 8px; }
.pclip { height: 9px; background: #2a2a2a repeating-linear-gradient(90deg, #8a8a8a 0 3px, transparent 3px 5px) 5px 0 / 82px 1px no-repeat; }
.pr { height: 26.200px; display: flex; align-items: stretch; white-space: nowrap; background: #444645; border-bottom: 1px solid #3a3c3b; }
.pr.alt { background: #545454; }
.pk { width: 187px; flex: none; display: flex; align-items: center; border-right: 2px solid #3a3c3b; }
.pk .g { margin-right: 4px; }
.pv { flex: 1; padding-left: 4px; display: flex; align-items: center; overflow: hidden; }
.pv.long { letter-spacing: .1px; }
.grp { background: #2a2a2a; font-weight: 700; padding-left: 4px; align-items: center; color: #c4c6c5; }
.sel-k { background: #72801e; color: #e8e8e8; --ln: #a8752a; }
.pedit { flex: 1; display: flex; align-items: stretch; background: #2e2e2e; overflow: hidden; }
.pfile { flex: 1; padding-left: 4px; display: flex; align-items: center; letter-spacing: .16px; border-right: 3px solid #545454; }
.pdots { width: 26px; background: #2a2a2a; border: 1px solid #1e1e1e; text-align: center; line-height: 24px; }
.pscroll { width: 19px; flex: none; display: flex; flex-direction: column; align-items: center; padding: 6px 0; color: #c8cac9; background: #3d3f3e; }
.pscroll svg { width: 11px; height: 7px; flex: none; }
.sc-up { transform: rotate(180deg); }
.thumb { width: 9px; height: 334px; margin: 24px 0 7px; background: #7f7f7f; border-radius: 4px; }

.tabs-bot { width: 543px; height: 32px; margin-top: 9px; display: flex; border-top: 2px solid #6c6e6d; }
.tab2 { width: 92px; display: flex; align-items: center; justify-content: center; font-size: 12.500px; color: #8c8e8d; }
.tab2.on { width: 76px; color: #e2e2e2; border-left: 1px solid #6a6c6b; border-right: 1px solid #6a6c6b; border-bottom: 4px solid #7eb512; }

.work { flex: 1; min-width: 0; display: flex; flex-direction: column; }
.view { height: 1087px; flex: none; background: linear-gradient(#302f66, #9a9ab2); border-bottom: 1px solid #101010; }
.scene { display: block; width: 100%; height: 1086px; }
.mdi { height: 38px; flex: none; border-top: 1px solid #666867; }
.mdi-tab { width: 156px; height: 37px; margin-left: 1px; display: flex; align-items: center; padding: 0 8px 0 6px; font-size: 13px; color: #dfe3e6; border-right: 1px solid #666867; border-bottom: 5px solid #7eb512; }
.fc { width: 22px; height: 22px; flex: none; margin-right: 8px; }
.mdi-tab span { flex: 1; }
.mdi-x { width: 14px; height: 14px; color: #2e2e2e; }
```
